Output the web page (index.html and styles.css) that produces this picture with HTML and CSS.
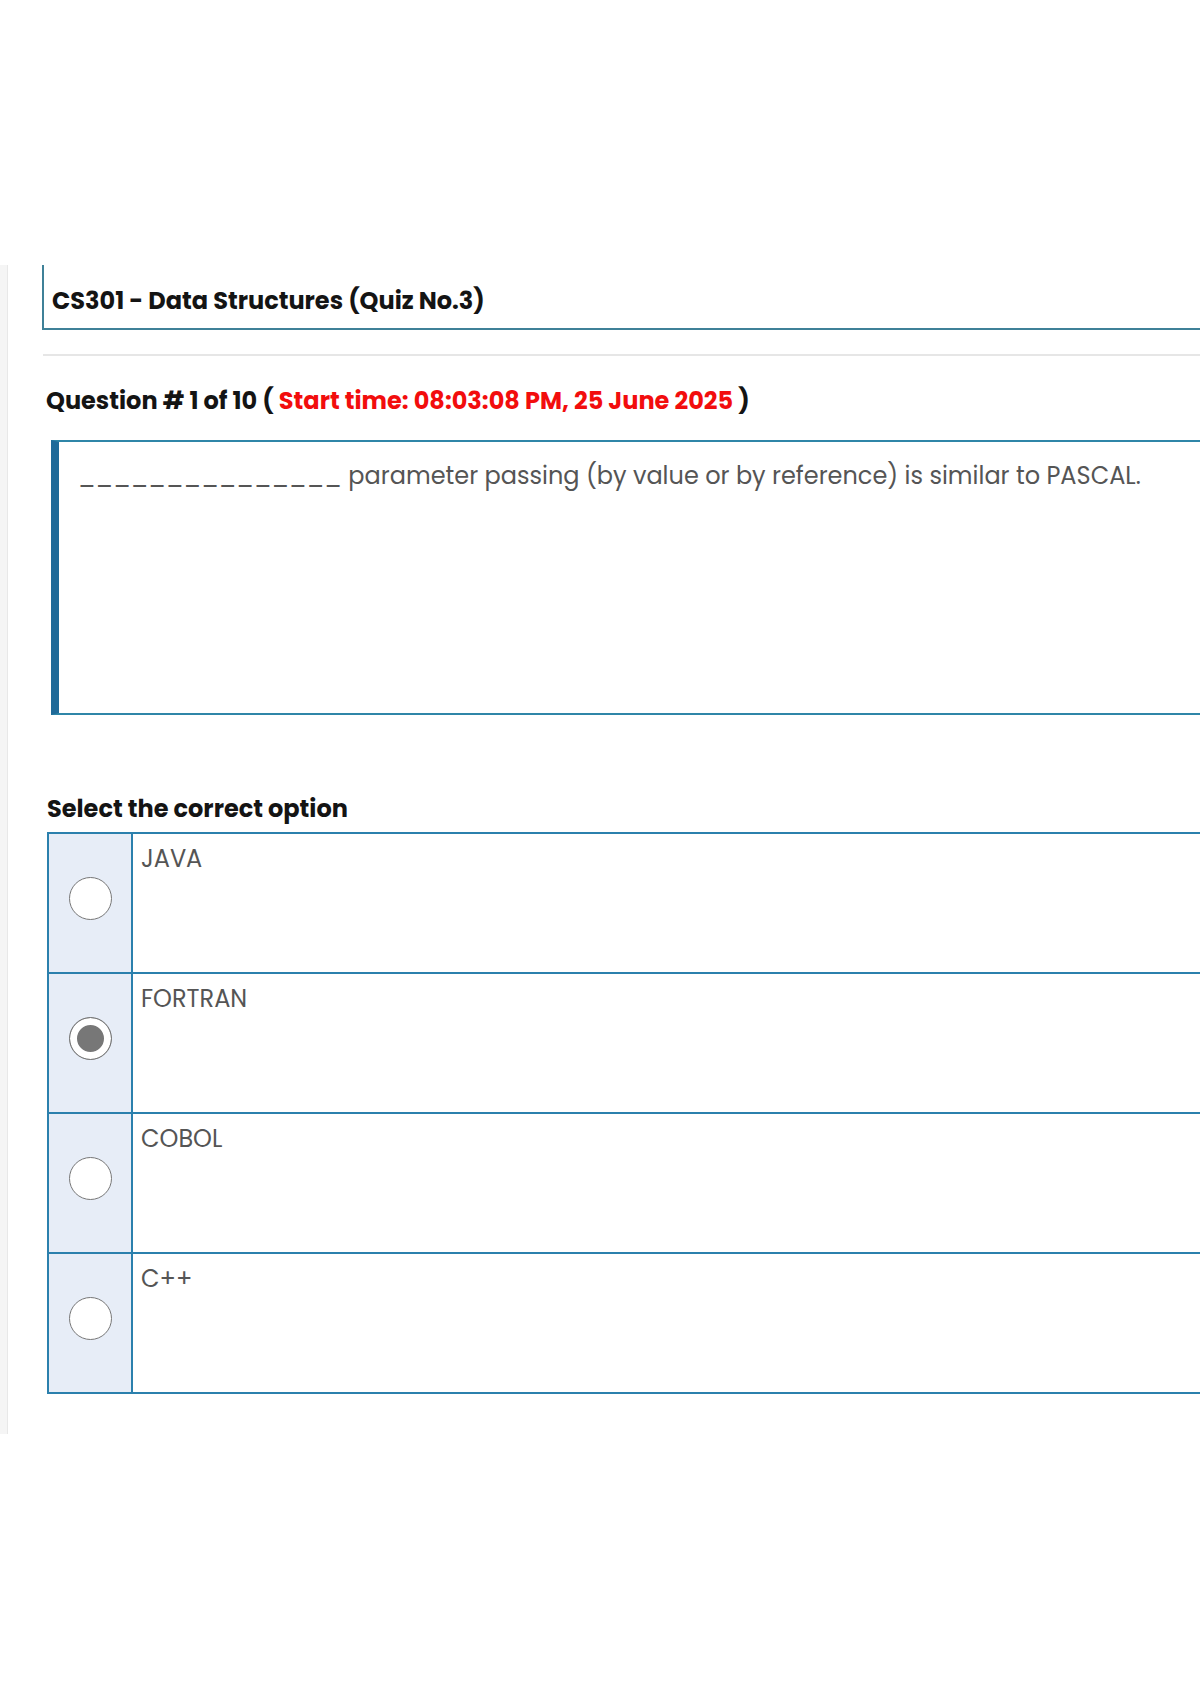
FILE: index.html
```html
<!DOCTYPE html>
<html lang="en">
<head>
<meta charset="utf-8">
<title>CS301 - Data Structures (Quiz No.3)</title>
<link rel="stylesheet" href="styles.css">
</head>
<body>
<div class="page">
  <div class="rail"></div>
  <main class="main">
    <div class="quiz-title">CS301 - Data Structures (Quiz No.3)</div>
    <div class="divider"></div>
    <div class="q-head">Question # 1 of 10 ( <span class="start">Start time: 08:03:08 PM, 25 June 2025</span> )</div>
    <div class="q-box">
      <p class="q-text">_______________ parameter passing (by value or by reference) is similar to PASCAL.</p>
    </div>
    <div class="select-label">Select the correct option</div>
    <div class="options">
      <label class="option">
        <span class="opt-radio"><input type="radio" name="ans"></span>
        <span class="opt-text">JAVA</span>
      </label>
      <label class="option">
        <span class="opt-radio"><input type="radio" name="ans" checked></span>
        <span class="opt-text">FORTRAN</span>
      </label>
      <label class="option">
        <span class="opt-radio"><input type="radio" name="ans"></span>
        <span class="opt-text">COBOL</span>
      </label>
      <label class="option">
        <span class="opt-radio"><input type="radio" name="ans"></span>
        <span class="opt-text">C++</span>
      </label>
    </div>
  </main>
</div>
</body>
</html>
```
FILE: styles.css
```css
html, body {
  margin: 0;
  padding: 0;
  background: #ffffff;
}
body {
  font-family: "Poppins", "Inter", "Noto Sans", sans-serif;
  color: #111;
}
.page {
  margin-top: 265px;
  display: flex;
  align-items: stretch;
}
.rail {
  width: 7px;
  flex: 0 0 7px;
  background: #f5f5f5;
  border-right: 1px solid #e8e8e8;
}
.main {
  flex: 1;
  padding: 0 0 40px 34px;
  min-width: 0;
}
.quiz-title {
  border-left: 2px solid #3f8198;
  border-bottom: 2px solid #3f8198;
  padding: 21px 0 12px 8px;
  line-height: 30px;
  font-size: 24px;
  font-weight: 700;
  color: #141414;
}
.divider {
  margin: 24px 0 0 1px;
  border-top: 2px solid #e6e6e6;
}
.q-head {
  margin: 30px 0 0 4px;
  line-height: 30px;
  font-size: 24px;
  font-weight: 700;
  color: #141414;
}
.start {
  color: #f20d0d;
}
.q-box {
  margin: 24px 0 0 9px;
  height: 271px;
  border-top: 2px solid #2f86a8;
  border-bottom: 2px solid #2f86a8;
  border-left: 8px solid #1f6a99;
  box-sizing: content-box;
}
.q-text {
  margin: 0;
  padding: 18px 0 0 19px;
  line-height: 32px;
  font-size: 24px;
  color: #555;
}
.select-label {
  margin: 79px 0 8px 5px;
  line-height: 30px;
  font-size: 24px;
  font-weight: 700;
  color: #141414;
}
.options {
  margin-left: 5px;
  border-top: 2px solid #2b80ad;
  border-left: 2px solid #2b80ad;
}
.option {
  display: flex;
  height: 138px;
  border-bottom: 2px solid #2b80ad;
}
.opt-radio {
  width: 84px;
  flex: 0 0 84px;
  background: #e7edf7;
  border-right: 2px solid #2b80ad;
  display: flex;
  align-items: center;
  justify-content: center;
  padding-bottom: 10px;
  box-sizing: border-box;
}
.opt-radio input {
  appearance: none;
  -webkit-appearance: none;
  margin: 0;
  width: 43px;
  height: 43px;
  border-radius: 50%;
  border: 1.5px solid #777;
  background: #fff;
  box-sizing: border-box;
}
.opt-radio input:checked {
  background: #777;
  box-shadow: inset 0 0 0 7px #fff;
}
.opt-text {
  padding: 10px 0 0 8px;
  line-height: 30px;
  font-size: 24px;
  color: #555;
}
```
